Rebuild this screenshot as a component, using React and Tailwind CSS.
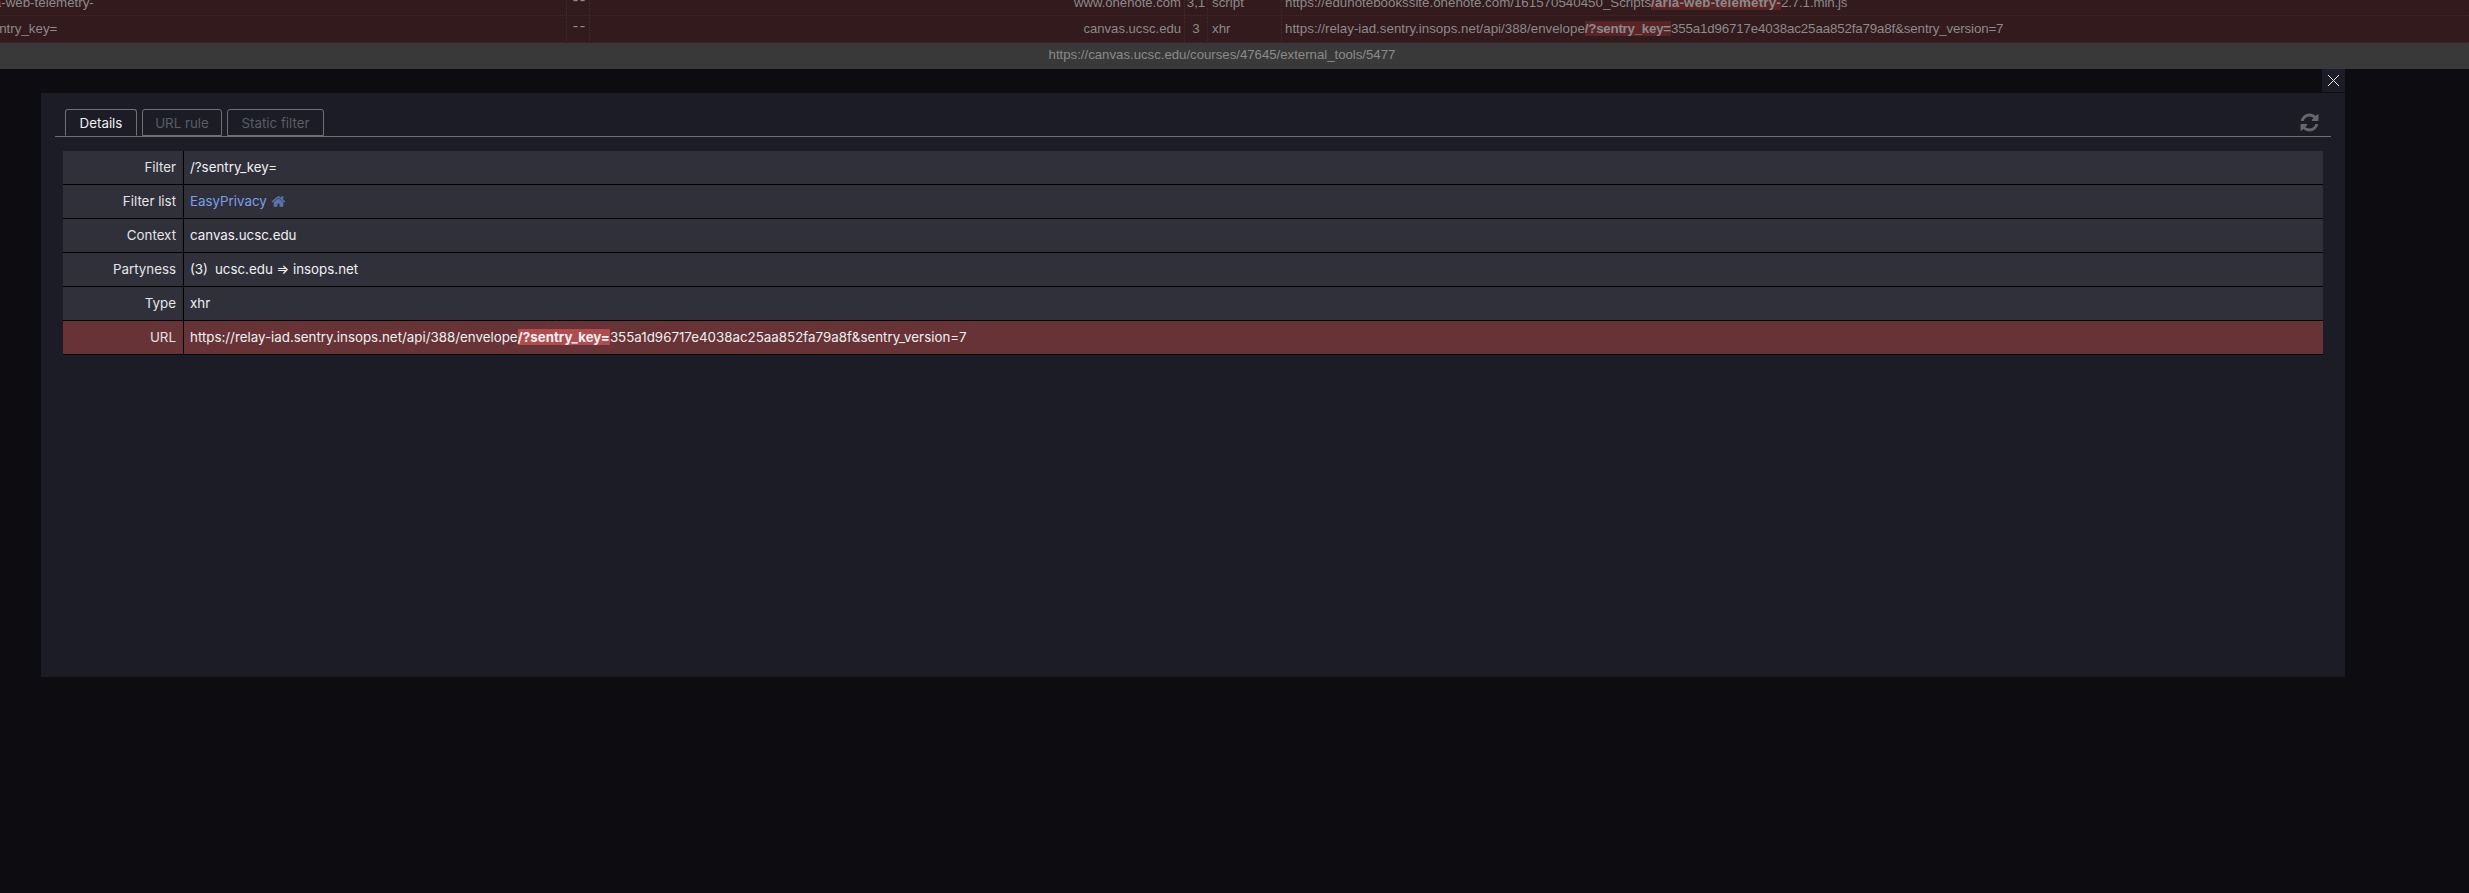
import React from 'react';

const sep = 'border-[#452a2d]';

const LogRow = ({ height, filter, offset, context, party, type, url, match, matchClass, rest }) => (
  <div className={`flex items-end overflow-hidden bg-[#321a1d] border-b border-dotted border-[#452a2d] text-[#8c8a8a] text-[13.33px] leading-[24px] font-['Liberation_Sans',sans-serif] ${height}`}>
    <div className="w-[566px] shrink-0 h-[24px] overflow-hidden whitespace-nowrap">
      <span className={offset}>{filter}</span>
    </div>
    <div className={`w-[24px] shrink-0 h-[24px] border-x border-dotted ${sep} text-center font-['Liberation_Mono',monospace] text-[15px] tracking-[-2px] leading-[21px]`}>--</div>
    <div className="w-[594px] shrink-0 h-[24px] pr-[3px] text-right text-[13.1px]">{context}</div>
    <div className={`w-[24px] shrink-0 h-[24px] border-x border-dotted ${sep} text-center`}>{party}</div>
    <div className={`w-[74px] shrink-0 h-[24px] pl-[4px] border-r border-dotted ${sep}`}>{type}</div>
    <div className="pl-[3px] h-[24px] whitespace-nowrap">
      {url}
      <b className={`bg-[#5a2427] ${matchClass}`}>{match}</b>
      <span className="tracking-[-0.15px]">{rest}</span>
    </div>
  </div>
);

const DetailRow = ({ label, red, children }) => (
  <div className={`flex h-[34px] border-b border-black ${red ? 'bg-[#673336]' : 'bg-[#30303b]'}`}>
    <div className="w-[121px] shrink-0 pr-[7px] text-right leading-[33px] text-[#e4e4e6] border-r border-black">{label}</div>
    <div className="flex-1 pl-[6px] leading-[33px] text-[#f0f0f2] whitespace-nowrap">{children}</div>
  </div>
);

const Tab = ({ active, width, children }) => (
  <div
    className={`h-[27px] rounded-t-[3px] border border-[#6f6f76] text-center leading-[26px] ${width} ${
      active ? 'border-b-[#1b1c25] bg-[#1b1c25] text-[#f0f0f2] -mb-px' : 'text-[#5c5c65]'
    }`}
  >
    {children}
  </div>
);

export default function App() {
  return (
    <div className="min-h-screen bg-[#0c0c11] font-['Inter',sans-serif] text-[13.33px] overflow-hidden">
      <LogRow
        height="h-[16px]"
        filter="aria-web-telemetry-"
        offset="-ml-[21px] inline-block"
        context="www.onenote.com"
        party="3,1"
        type="script"
        url="https://edunotebookssite.onenote.com/161570540450_Scripts"
        match="/aria-web-telemetry-"
        matchClass="tracking-[0.2px]"
        rest="2.7.1.min.js"
      />
      <LogRow
        height="h-[27px] pb-px"
        filter="/?sentry_key="
        offset="-ml-[26px] inline-block"
        context="canvas.ucsc.edu"
        party="3"
        type="xhr"
        url="https://relay-iad.sentry.insops.net/api/388/envelope"
        match="/?sentry_key="
        matchClass="tracking-[-0.25px]"
        rest="355a1d96717e4038ac25aa852fa79a8f&sentry_version=7"
      />
      <div className="h-[26px] pr-[25px] bg-[#383938] text-center text-[#8c8a8a] text-[13.2px] leading-[24px] font-['Liberation_Sans',sans-serif]">
        https://canvas.ucsc.edu/courses/47645/external_tools/5477
      </div>

      <div className="ml-[41px] w-[2304px]">
        <div className="flex justify-end h-[24px]">
          <button className="w-[23px] h-[23px] bg-[#1b1c25] flex items-center justify-center text-[#e8e8ea]">
            <svg width="13" height="13" viewBox="0 0 13 13" fill="none" stroke="currentColor" strokeWidth="1">
              <path d="M1 1L12 12M12 1L1 12" />
            </svg>
          </button>
        </div>
        <div className="h-[584px] bg-[#1b1c25] pt-[16px] pb-[22px] pl-[14px] pr-[14px]">
          <div className="flex items-end justify-between border-b border-[#6f6f76] pl-[10px] pr-[11px]">
            <div className="flex gap-[5px]">
              <Tab active width="w-[72px]">Details</Tab>
              <Tab width="w-[80px]">URL rule</Tab>
              <Tab width="w-[97px]">Static filter</Tab>
            </div>
            <svg viewBox="0 0 1792 1792" fill="currentColor" className="mb-[3px] w-[21px] h-[21px] text-[#65656a]">
              <path d="M1639 1056q0 5-1 7-64 268-268 434.5t-478 166.5q-146 0-282.5-55t-243.5-157l-129 129q-19 19-45 19t-45-19-19-45v-448q0-26 19-45t45-19h448q26 0 45 19t19 45-19 45l-137 137q71 66 161 102t187 36q134 0 250-65t186-179q11-17 53-117 8-23 30-23h192q13 0 22.5 9.5t9.5 22.5zm25-800v448q0 26-19 45t-45 19h-448q-26 0-45-19t-19-45 19-45l138-138q-148-137-349-137-134 0-250 65t-186 179q-11 17-53 117-8 23-30 23h-199q-13 0-22.5-9.5t-9.5-22.5v-7q65-268 270-434.5t480-166.5q146 0 284 55.5t245 156.5l130-129q19-19 45-19t45 19 19 45z" />
            </svg>
          </div>
          <div className="mt-[14px] mr-[8px] ml-[8px]">
            <DetailRow label="Filter">/?sentry_key=</DetailRow>
            <DetailRow label="Filter list">
              <span className="text-[#7c9fe8]">EasyPrivacy</span>
              <svg viewBox="0 0 1792 1792" fill="currentColor" className="inline-block ml-[4px] w-[15px] h-[15px] text-[#5a72ab] align-[-3px]">
                <path d="M1472 992v480q0 26-19 45t-45 19h-384v-384h-256v384h-384q-26 0-45-19t-19-45v-480q0-1 .5-3t.5-3l575-474 575 474q1 2 1 6zm223-69l-62 74q-8 9-21 11h-3q-13 0-21-7l-692-577-692 577q-12 8-24 7-13-2-21-11l-62-74q-8-10-7-23.5t11-21.5l719-599q32-26 76-26t76 26l244 204v-195q0-14 9-23t23-9h192q14 0 23 9t9 23v408l219 182q10 8 11 21.5t-7 23.5z" />
              </svg>
            </DetailRow>
            <DetailRow label="Context">canvas.ucsc.edu</DetailRow>
            <DetailRow label="Partyness">
              (3)<span className="ml-[7px]">ucsc.edu ⇒ insops.net</span>
            </DetailRow>
            <DetailRow label="Type">xhr</DetailRow>
            <DetailRow label="URL" red>
              https://relay-iad.sentry.insops.net/api/388/envelope
              <b className="bg-[#b04c4e]">/?sentry_key=</b>
              355a1d96717e4038ac25aa852fa79a8f&sentry_version=7
            </DetailRow>
          </div>
        </div>
      </div>
    </div>
  );
}
